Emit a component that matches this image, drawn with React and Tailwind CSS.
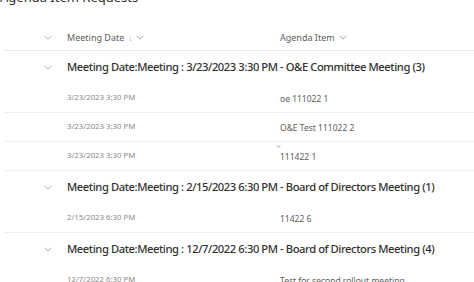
import React from "react";

const groups = [
  {
    title: "Meeting Date:Meeting : 3/23/2023 3:30 PM - O&E Committee Meeting (3)",
    rows: [
      { date: "3/23/2023 3:30 PM", item: "oe 111022 1" },
      { date: "3/23/2023 3:30 PM", item: "O&E Test 111022 2" },
      { date: "3/23/2023 3:30 PM", item: "111422 1", mark: true },
    ],
  },
  {
    title: "Meeting Date:Meeting : 2/15/2023 6:30 PM - Board of Directors Meeting (1)",
    rows: [{ date: "2/15/2023 6:30 PM", item: "11422 6" }],
  },
  {
    title: "Meeting Date:Meeting : 12/7/2022 6:30 PM - Board of Directors Meeting (4)",
    rows: [{ date: "12/7/2022 6:30 PM", item: "Test for second rollout meeting" }],
  },
];

function Chevron({ className = "" }) {
  return (
    <svg width="8" height="5" viewBox="0 0 8 5" className={className}>
      <path d="M0.5 0.8 L4 4.2 L7.5 0.8" fill="none" stroke="#a19f9d" strokeWidth="0.9" />
    </svg>
  );
}

function Group({ g }) {
  return (
    <div>
      <div className="flex h-[33px] items-center">
        <div className="w-[67px] shrink-0 pl-[44px]">
          <Chevron />
        </div>
        <div className="whitespace-nowrap text-[11.2px] font-medium tracking-[-0.42px] text-[#323130]">{g.title}</div>
      </div>
      {g.rows.map((r, i) => (
        <div key={i} className="ml-[4px] flex h-[29px] items-center border-b border-[#f0efee]">
          <div className="w-[276px] shrink-0 pl-[63px] text-[7.8px] text-[#8a8886]">{r.date}</div>
          <div className="relative pt-[2px] text-[8.5px] text-[#605e5c]">
            {r.mark && (
              <svg width="5" height="4" viewBox="0 0 5 4" className="absolute left-[-4px] top-[-4px]">
                <path d="M0.5 0.5 Q2 3.5 4.5 1" fill="none" stroke="#8a8886" strokeWidth="0.7" />
              </svg>
            )}
            {r.item}
          </div>
        </div>
      ))}
    </div>
  );
}

export default function App() {
  return (
    <div className="h-[282px] w-[474px] overflow-hidden bg-white" style={{ fontFamily: '"Noto Sans", "Open Sans", sans-serif' }}>
      <div className="flex h-[25px] flex-col">
        <div className="-mt-[12px] flex items-center gap-[9px] text-[13px] leading-[18px] text-[#323130]">
          <span>Agenda Item Requests</span>
          <span className="text-[8px]">★</span>
        </div>
      </div>
      <div className="ml-[4px] flex h-[26px] items-center border-b border-[#edebe9] text-[9px] text-[#605e5c]">
        <div className="w-[63px] shrink-0 pl-[40px]">
          <Chevron />
        </div>
        <div className="flex w-[213px] shrink-0 items-center">
          <span>Meeting Date</span>
          <span className="ml-[4px] text-[8px] text-[#a19f9d]">↓</span>
          <Chevron className="ml-[4px]" />
        </div>
        <div className="flex items-center">
          <span>Agenda Item</span>
          <Chevron className="ml-[4px]" />
        </div>
      </div>
      {groups.map((g, i) => (
        <Group key={i} g={g} />
      ))}
    </div>
  );
}
